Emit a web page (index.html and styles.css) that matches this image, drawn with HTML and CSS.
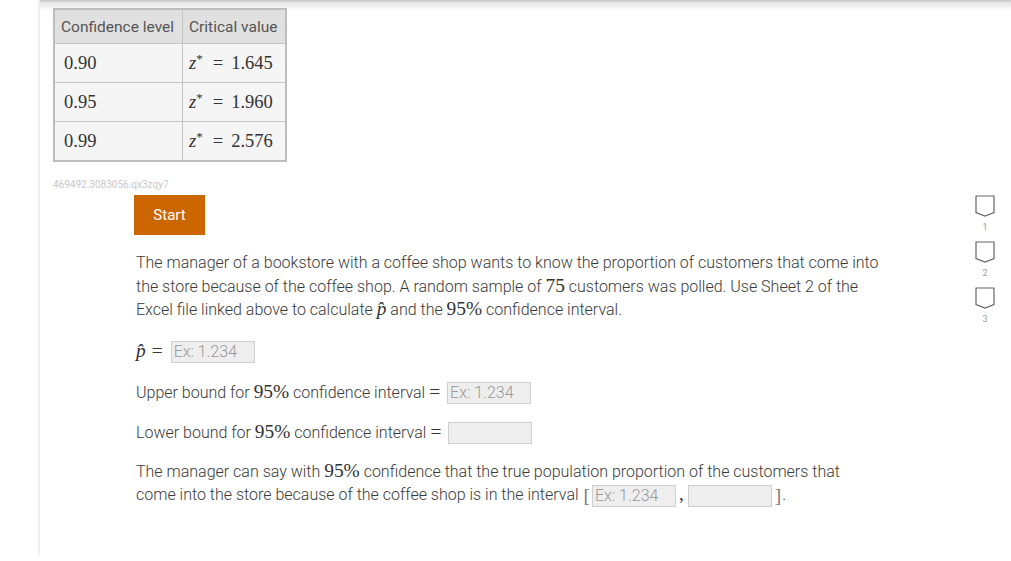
FILE: index.html
```html
<!DOCTYPE html>
<html>
<head>
<meta charset="utf-8">
<link rel="stylesheet" href="styles.css">
</head>
<body>
<div class="frame">
  <div class="content">
    <table class="ztable">
      <thead>
        <tr><th class="c1">Confidence level</th><th class="c2">Critical value</th></tr>
      </thead>
      <tbody>
        <tr><td class="m">0.90</td><td class="m"><i>z</i><sup>*</sup><span class="eq">=</span>1.645</td></tr>
        <tr><td class="m">0.95</td><td class="m"><i>z</i><sup>*</sup><span class="eq">=</span>1.960</td></tr>
        <tr><td class="m">0.99</td><td class="m"><i>z</i><sup>*</sup><span class="eq">=</span>2.576</td></tr>
      </tbody>
    </table>
    <div class="ident">469492.3083056.qx3zqy7</div>
    <div class="activity">
      <div class="main">
        <button class="start">Start</button>
        <p class="para">The manager of a bookstore with a coffee shop wants to know the proportion of customers that come into<br>the store because of the coffee shop. A random sample of <span class="m">75</span> customers was polled. Use Sheet 2 of the<br>Excel file linked above to calculate <span class="m"><i>p̂</i></span> and the <span class="m">95%</span> confidence interval.</p>
        <div class="line first"><span class="m"><i>p̂</i><span class="eq">=</span></span><span class="inp">Ex: 1.234</span></div>
        <div class="line second">Upper bound for <span class="m">95%</span> confidence interval<span class="m eq">=</span><span class="inp">Ex: 1.234</span></div>
        <div class="line third">Lower bound for <span class="m">95%</span> confidence interval<span class="m eq">=</span><span class="inp"></span></div>
        <p class="para last">The manager can say with <span class="m">95%</span> confidence that the true population proportion of the customers that<br>come into the store because of the coffee shop is in the interval <span class="m br">[</span><span class="inp">Ex: 1.234</span><span class="m comma">,</span><span class="inp"></span><span class="m br rb">]</span>.</p>
      </div>
      <div class="nav">
        <div class="step"><svg width="20" height="22" viewBox="0 0 20 22"><path d="M1 1 H19 V17.5 L10 21 L1 17.5 Z" fill="none" stroke="#666" stroke-width="1.2"/></svg><span>1</span></div>
        <div class="step"><svg width="20" height="22" viewBox="0 0 20 22"><path d="M1 1 H19 V17.5 L10 21 L1 17.5 Z" fill="none" stroke="#666" stroke-width="1.2"/></svg><span>2</span></div>
        <div class="step"><svg width="20" height="22" viewBox="0 0 20 22"><path d="M1 1 H19 V17.5 L10 21 L1 17.5 Z" fill="none" stroke="#666" stroke-width="1.2"/></svg><span>3</span></div>
      </div>
    </div>
  </div>
</div>
</body>
</html>
```
FILE: styles.css
```css
html, body {
  margin: 0;
  padding: 0;
  background: #fff;
}
body {
  font-family: Roboto, "Liberation Sans", sans-serif;
  color: #3a3a3a;
  width: 1011px;
  height: 561px;
  overflow: hidden;
}
.frame {
  margin-left: 38px;
  height: 555px;
  border-left: 2px solid #eeeeee;
  background: linear-gradient(to bottom, #c4c4c4 0, #e6e6e6 3px, #fafafa 9px, #fff 12px) no-repeat top left / 100% 12px;
}
.content {
  padding: 8px 0 0 13px;
}
.ztable {
  border-collapse: collapse;
  border: 2px solid #bdbdbd;
  background: #f5f5f5;
}
.ztable th {
  background: #e0e0e0;
  font-weight: 400;
  font-size: 15.5px;
  color: #555;
  height: 33px;
  padding: 0 6px;
  text-align: left;
  border: 1px solid #c4c4c4;
  white-space: nowrap;
}
.ztable th.c2 { padding-right: 8px; }
.ztable td {
  height: 38px;
  padding: 0 9px;
  border: 1px solid #c4c4c4;
  color: #333;
  font-size: 18.5px;
  white-space: nowrap;
}
.ztable td:last-child { padding-left: 6px; padding-right: 8px; }
.ztable th.c1 { width: 115px; }
.m {
  font-family: "Liberation Serif", "DejaVu Serif", serif;
  font-size: 18.5px;
  color: #333;
  font-weight: 400;
}
.m sup { font-size: 13px; vertical-align: 6px; line-height: 0; }
.m i { font-style: italic; }
.eq { margin: 0 8px 0 10px; }
.ident {
  font-size: 10px;
  color: #c8c8c8;
  margin-top: 17px;
  line-height: 12px;
}
.activity {
  display: flex;
  margin-top: 4px;
}
.main {
  margin-left: 81px;
  width: 760px;
  font-size: 16px;
  font-weight: 300;
  color: #3a3a3a;
}
.main .m { font-size: 19.4px; }
.start {
  background: #cc6600;
  border: none;
  color: #fff;
  font-family: Roboto, "Liberation Sans", sans-serif;
  font-size: 15px;
  width: 71px;
  height: 40px;
  padding: 0;
  display: block;
}
.para {
  margin: 17px 0 0 2px;
  line-height: 22.5px;
  white-space: nowrap;
}
.line {
  margin: 19px 0 0 2px;
  line-height: 22px;
  height: 22px;
  white-space: nowrap;
}
.line.first { margin-top: 18px; }
.line.third { margin-top: 18px; }
.line .eq { margin: 0 7px 0 4px; }
.line.first .eq { margin: 0 8px 0 6px; }
.para.last { margin-top: 17px; }
.inp {
  display: inline-block;
  box-sizing: border-box;
  width: 84px;
  height: 22px;
  background: #eeeeee;
  border: 1px solid #cfcfcf;
  color: #999;
  font-size: 16px;
  line-height: 20px;
  padding-left: 2px;
  vertical-align: middle;
  font-family: Roboto, "Liberation Sans", sans-serif;
  font-weight: 300;
}
.br { font-size: 23px; color: #777; vertical-align: middle; margin: 0 2px 0 1px; line-height: 0; }
.br.rb { margin: 0 1px 0 3px; }
.comma { margin: 0 4px 0 3px; }
.nav {
  margin-left: 81px;
  margin-top: 0;
  display: flex;
  flex-direction: column;
  align-items: center;
  width: 20px;
  gap: 8px;
}
.step {
  display: flex;
  flex-direction: column;
  align-items: center;
}
.step span {
  font-size: 9px;
  color: #999;
  line-height: 12px;
  margin-top: 4px;
}
```
